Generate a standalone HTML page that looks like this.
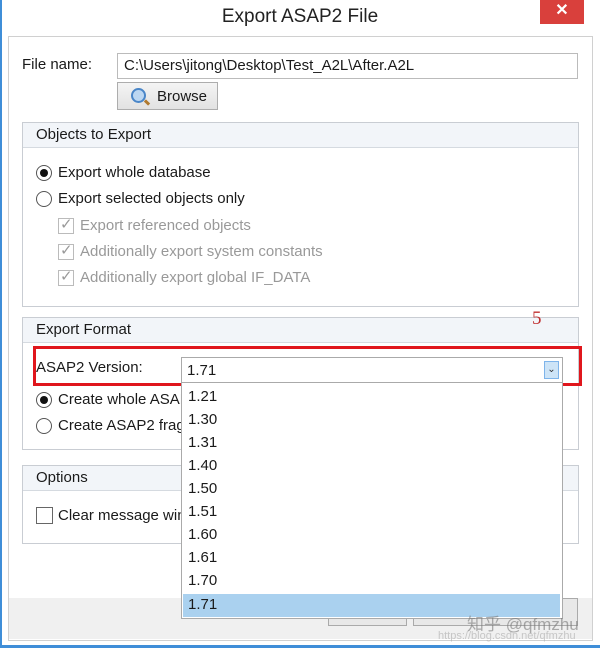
<html><head><style>
body{margin:0;width:600px;height:648px;background:#fff;font-family:"Liberation Sans",sans-serif;font-size:15px;color:#1a1a1a;position:relative;overflow:hidden}
.a{position:absolute}
.grp{position:absolute;border:1px solid #c9cdd3;background:#fff}
.hd{position:absolute;left:0;right:0;top:0;background:#f2f5f9;border-bottom:1px solid #d5dae0;padding-left:13px;box-sizing:border-box}
.rad{position:absolute;width:14px;height:14px;border:1px solid #555;border-radius:50%;background:#fff}
.rad.on::after{content:"";position:absolute;left:3px;top:3px;width:8px;height:8px;border-radius:50%;background:#111}
.cb{position:absolute;width:14px;height:14px;border:1px solid #bbb;background:#fff}
.g{color:#999}
.it{position:absolute;left:6px;height:23px;line-height:23px}
</style></head><body>
<div class="a" style="left:0;top:0;width:2px;height:648px;background:#3f8ed8"></div>
<div class="a" style="left:0;top:645px;width:600px;height:3px;background:#3f8ed8"></div>
<div class="a" style="left:540px;top:0;width:44px;height:24px;background:#d9403c;color:#fff;text-align:center;font-size:16px;line-height:22px;font-weight:bold">✕</div>
<div class="a" style="left:0;width:600px;top:6px;text-align:center;font-size:19px;color:#222">Export ASAP2 File</div>
<div class="a" style="left:8px;top:36px;width:583px;height:603px;border:1px solid #d0d0d0;background:#fff"></div>
<div class="a" style="left:9px;top:598px;width:583px;height:41px;background:#f0f0f0"></div>
<div class="a" style="left:328px;top:598px;width:77px;height:26px;border:1px solid #aaa;background:#e8e8e8"></div>
<div class="a" style="left:413px;top:598px;width:163px;height:26px;border:1px solid #aaa;background:#e8e8e8"></div>
<div class="a" style="left:22px;top:56px">File name:</div>
<div class="a" style="left:117px;top:53px;line-height:24px;padding-left:6px;box-sizing:border-box;width:461px;height:26px;border:1px solid #bbb">C:\Users\jitong\Desktop\Test_A2L\After.A2L</div>
<div class="a" style="left:117px;top:82px;width:101px;height:28px;border:1px solid #adadad;background:linear-gradient(#f4f4f4,#e2e2e2);box-sizing:border-box"><span class="a" style="left:13px;top:5px;width:11px;height:11px;border:2px solid #4a86c8;border-radius:50%;background:#bcd7f2"></span><span class="a" style="left:26px;top:18px;width:6px;height:3px;background:#b07a30;transform:rotate(45deg)"></span><span class="a" style="left:39px;top:5px">Browse</span></div>
<div class="grp" style="left:22px;top:122px;width:555px;height:183px"><div class="hd" style="height:25px;line-height:24px">Objects to Export</div></div>
<div class="rad on" style="left:36px;top:165px"></div><div class="a" style="left:58px;top:164px">Export whole database</div>
<div class="rad" style="left:36px;top:191px"></div><div class="a" style="left:58px;top:190px">Export selected objects only</div>
<div class="cb" style="left:58px;top:218px"></div><div class="a g" style="left:60px;top:215px">✓</div><div class="a g" style="left:80px;top:217px">Export referenced objects</div>
<div class="cb" style="left:58px;top:244px"></div><div class="a g" style="left:60px;top:241px">✓</div><div class="a g" style="left:80px;top:243px">Additionally export system constants</div>
<div class="cb" style="left:58px;top:270px"></div><div class="a g" style="left:60px;top:267px">✓</div><div class="a g" style="left:80px;top:269px">Additionally export global IF_DATA</div>
<div class="grp" style="left:22px;top:317px;width:555px;height:131px"><div class="hd" style="height:25px;line-height:24px">Export Format</div></div>
<div class="a" style="left:532px;top:308px;color:#c03030;font-family:'Liberation Serif',serif;font-size:19px">5</div>
<div class="a" style="left:36px;top:359px">ASAP2 Version:</div>
<div class="rad on" style="left:36px;top:392px"></div><div class="a" style="left:58px;top:391px">Create whole ASAP2</div>
<div class="rad" style="left:36px;top:418px"></div><div class="a" style="left:58px;top:417px">Create ASAP2 fragment</div>
<div class="grp" style="left:22px;top:465px;width:555px;height:77px"><div class="hd" style="height:25px;line-height:24px">Options</div></div>
<div class="a" style="left:36px;top:507px;width:15px;height:15px;border:1px solid #666;background:#fff"></div><div class="a" style="left:58px;top:507px">Clear message window</div>
<div class="a" style="left:181px;top:357px;width:382px;height:26px;border:1px solid #aaa;background:#fff;box-sizing:border-box"><span class="a" style="left:5px;top:4px">1.71</span><span class="a" style="left:362px;top:3px;width:15px;height:18px;background:#cde4f7;border:1px solid #7eb4ea;box-sizing:border-box;font-size:10px;text-align:center;line-height:16px;color:#333">⌄</span></div>
<div class="a" style="left:33px;top:346px;width:549px;height:40px;border:3px solid #e0161c;box-sizing:border-box"></div>
<div class="a" style="left:181px;top:383px;width:382px;height:236px;border:1px solid #aaa;border-top:none;background:#fff;box-sizing:border-box">
<div class="a" style="left:1px;right:2px;top:211px;height:23px;background:#aad1ef"></div>
<div class="it" style="top:2px">1.21</div><div class="it" style="top:25px">1.30</div><div class="it" style="top:48px">1.31</div><div class="it" style="top:71px">1.40</div><div class="it" style="top:94px">1.50</div><div class="it" style="top:117px">1.51</div><div class="it" style="top:140px">1.60</div><div class="it" style="top:163px">1.61</div><div class="it" style="top:186px">1.70</div><div class="it" style="top:210px">1.71</div>
</div>
<div class="a" style="left:467px;top:610px;color:rgba(120,120,120,.6);font-family:'Liberation Sans','Noto Sans CJK SC',sans-serif;font-size:17px">知乎 @qfmzhu</div>
<div class="a" style="left:438px;top:630px;color:rgba(180,180,180,.7);font-size:11px">https://blog.csdn.net/qfmzhu</div>
</body></html>
